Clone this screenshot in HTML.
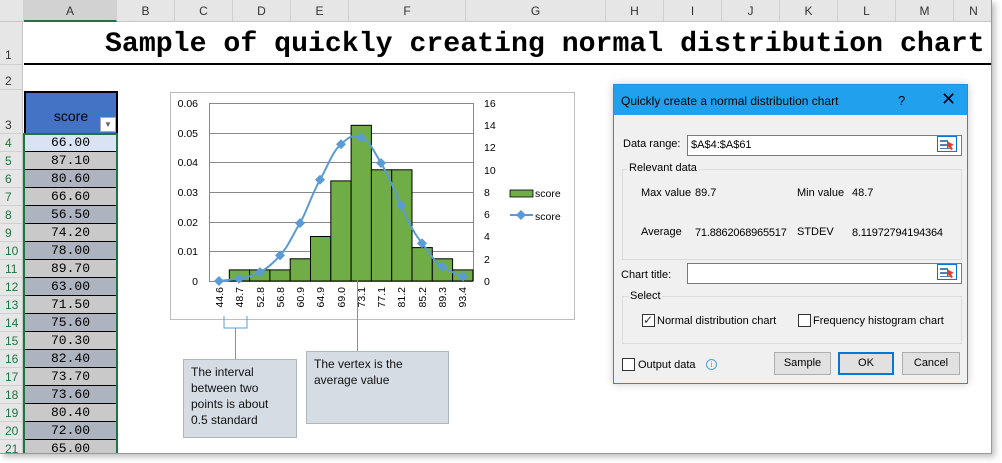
<!DOCTYPE html>
<html><head><meta charset="utf-8"><style>
*{margin:0;padding:0;box-sizing:border-box}
body{width:1002px;height:463px;background:#fff;position:relative;overflow:hidden;font-family:"Liberation Sans",sans-serif}
.a{position:absolute}
.ch{position:absolute;top:0;height:22px;background:#e6e6e6;border-right:1px solid #d0d0d0;border-bottom:1px solid #c6c6c6;font-size:12px;color:#333;text-align:center;line-height:22px}
.rh{position:absolute;left:0;width:23px;background:#e6e6e6;border-bottom:1px solid #d0d0d0;border-right:1px solid #c6c6c6;font-size:12px;color:#333;padding-left:5px}
.cell{position:absolute;left:24px;width:93px;height:18px;border-bottom:1px solid #000;font-family:"Liberation Mono",monospace;font-size:13px;text-align:center;line-height:18px;color:#000}
.dl{position:absolute;font-size:11px;color:#000;font-family:"Liberation Sans",sans-serif}
.btn{position:absolute;height:23px;background:#e1e1e1;border:1px solid #adadad;font-size:11px;text-align:center;line-height:21px}
.cb{position:absolute;width:13px;height:13px;border:1px solid #333;background:#fff}
.grp{position:absolute;border:1px solid #dcdcdc}
</style></head><body>
<div class="a" style="left:0;top:0;width:992px;height:454px;border-right:1px solid #999;border-bottom:1px solid #999;box-shadow:3px 3px 6px rgba(0,0,0,.25);background:#fff;overflow:hidden">
<div class="ch" style="left:0;width:24px;background:#e6e6e6"></div>
<div class="ch" style="left:24px;width:93px;background:#d2d2d2;border-bottom:2px solid #217346">A</div>
<div class="ch" style="left:117px;width:58px">B</div>
<div class="ch" style="left:175px;width:58px">C</div>
<div class="ch" style="left:233px;width:58px">D</div>
<div class="ch" style="left:291px;width:58px">E</div>
<div class="ch" style="left:349px;width:117px">F</div>
<div class="ch" style="left:466px;width:140px">G</div>
<div class="ch" style="left:606px;width:58px">H</div>
<div class="ch" style="left:664px;width:58px">I</div>
<div class="ch" style="left:722px;width:58px">J</div>
<div class="ch" style="left:780px;width:58px">K</div>
<div class="ch" style="left:838px;width:58px">L</div>
<div class="ch" style="left:896px;width:58px">M</div>
<div class="ch" style="left:954px;width:40px">N</div>
<div class="rh" style="top:22px;height:43px;padding-top:26px">1</div>
<div class="rh" style="top:65px;height:25px;padding-top:9px">2</div>
<div class="rh" style="top:90px;height:44px;padding-top:28px">3</div>
<div class="a" style="left:105px;top:29px;font-family:'Liberation Mono',monospace;font-weight:bold;font-size:28.2px;white-space:pre;color:#000">Sample of quickly creating normal distribution chart</div>
<div class="a" style="left:24px;top:63px;width:970px;height:2px;background:#000"></div>
<div class="a" style="left:24px;top:91px;width:94px;height:43px;background:#4472c4;border:2px solid #000;border-bottom:none;text-align:center;font-size:14px;padding-top:15px">score</div>
<div class="a" style="left:100px;top:117px;width:16px;height:15px;background:#fff;border:1px solid #aaa;font-size:8px;color:#666;text-align:center;line-height:14px">▼</div>
<div id="rows"></div>
<div class="a" style="left:23px;top:133px;width:95px;height:330px;border:2px solid #217346;border-bottom:none"></div>
<svg class="a" style="left:0;top:0" width="992" height="454">
<rect x="170.5" y="92.5" width="404" height="227" fill="#fff" stroke="#bdbdbd"/>
<g stroke="#898989" stroke-width="1">
<line x1="209" y1="103.5" x2="473" y2="103.5"/><line x1="209" y1="133.5" x2="473" y2="133.5"/><line x1="209" y1="162.5" x2="473" y2="162.5"/><line x1="209" y1="192.5" x2="473" y2="192.5"/><line x1="209" y1="222.5" x2="473" y2="222.5"/><line x1="209" y1="251.5" x2="473" y2="251.5"/><line x1="209" y1="281.5" x2="473" y2="281.5"/>
<line x1="209.5" y1="103" x2="209.5" y2="281"/><line x1="473.5" y1="103" x2="473.5" y2="281"/>
</g>
<g fill="#70ad47" stroke="#000" stroke-width="1">
<rect x="229.3" y="269.9" width="20.3" height="11.1"/><rect x="249.6" y="269.9" width="20.3" height="11.1"/><rect x="269.9" y="269.9" width="20.3" height="11.1"/><rect x="290.2" y="258.8" width="20.3" height="22.2"/><rect x="310.5" y="236.5" width="20.3" height="44.5"/><rect x="330.8" y="180.9" width="20.3" height="100.1"/><rect x="351.1" y="125.3" width="20.3" height="155.7"/><rect x="371.4" y="169.8" width="20.3" height="111.2"/><rect x="391.7" y="169.8" width="20.3" height="111.2"/><rect x="412" y="247.6" width="20.3" height="33.4"/><rect x="432.3" y="258.8" width="20.3" height="22.2"/><rect x="452.6" y="269.9" width="20.3" height="11.1"/>
</g>
<path d="M219,281 C225,280 232,280 239,278.8 C248,277 252,276 260,272.1 C268,268 273,263 280,255.4 C288,247 292,236 300,223.1 C307,211 311,196 320,179.8 C328,166 332,152 341,144.2 C349,137 352,134 361,137.5 C370,141 373,150 381,163 C389,176 394,190 401,205.3 C408,221 413,232 422,243.2 C430,253 434,262 442,266.5 C450,271 455,274 463,276.5" fill="none" stroke="#5b9bd5" stroke-width="2"/>
<g fill="#5b9bd5">
<path d="M219,276l5,5-5,5-5-5z"/><path d="M239,273.8l5,5-5,5-5-5z"/><path d="M260,267.1l5,5-5,5-5-5z"/><path d="M280,250.4l5,5-5,5-5-5z"/><path d="M300,218.1l5,5-5,5-5-5z"/><path d="M320,174.8l5,5-5,5-5-5z"/><path d="M341,139.2l5,5-5,5-5-5z"/><path d="M361,132.5l5,5-5,5-5-5z"/><path d="M381,158l5,5-5,5-5-5z"/><path d="M401,200.3l5,5-5,5-5-5z"/><path d="M422,238.2l5,5-5,5-5-5z"/><path d="M442,261.5l5,5-5,5-5-5z"/><path d="M463,271.5l5,5-5,5-5-5z"/>
</g>
<g font-family="Liberation Sans" font-size="10.5" fill="#000" text-anchor="end">
<text x="198" y="107">0.06</text><text x="198" y="137">0.05</text><text x="198" y="166">0.04</text><text x="198" y="196">0.03</text><text x="198" y="226">0.02</text><text x="198" y="255">0.01</text><text x="198" y="285">0</text>
</g>
<g font-family="Liberation Sans" font-size="10.5" fill="#000">
<text x="484" y="107">16</text><text x="484" y="129">14</text><text x="484" y="151">12</text><text x="484" y="174">10</text><text x="484" y="196">8</text><text x="484" y="218">6</text><text x="484" y="240">4</text><text x="484" y="263">2</text><text x="484" y="285">0</text>
<text x="535" y="197">score</text><text x="535" y="220">score</text>
</g>
<rect x="510" y="190" width="23" height="7" fill="#70ad47" stroke="#000" stroke-width=".8"/>
<line x1="510" y1="215" x2="533" y2="215" stroke="#5b9bd5" stroke-width="2"/><path d="M521,210l5,5-5,5-5-5z" fill="#5b9bd5"/>
<g font-family="Liberation Sans" font-size="10.5" fill="#000" text-anchor="end">
<text transform="translate(223,287) rotate(-90)">44.6</text><text transform="translate(243,287) rotate(-90)">48.7</text><text transform="translate(264,287) rotate(-90)">52.8</text><text transform="translate(284,287) rotate(-90)">56.8</text><text transform="translate(304,287) rotate(-90)">60.9</text><text transform="translate(324,287) rotate(-90)">64.9</text><text transform="translate(345,287) rotate(-90)">69.0</text><text transform="translate(365,287) rotate(-90)">73.1</text><text transform="translate(385,287) rotate(-90)">77.1</text><text transform="translate(405,287) rotate(-90)">81.2</text><text transform="translate(426,287) rotate(-90)">85.2</text><text transform="translate(446,287) rotate(-90)">89.3</text><text transform="translate(466,287) rotate(-90)">93.4</text>
</g>
<path d="M224,316 L224,328 L247,328 L247,316 M235.5,328 L235.5,359" fill="none" stroke="#5b9bd5" stroke-width="1"/>
<line x1="357.5" y1="145" x2="357.5" y2="351" stroke="#5b9bd5"/>
<rect x="183.5" y="359.5" width="113" height="78" fill="#d6dce4" stroke="#aeb5bd"/>
<rect x="306.5" y="351.5" width="142" height="72" fill="#d6dce4" stroke="#aeb5bd"/>
<g font-family="Liberation Sans" font-size="12" fill="#111">
<text x="191" y="376">The interval</text><text x="191" y="392">between two</text><text x="191" y="408">points is about</text><text x="191" y="424">0.5 standard</text>
<text x="314" y="368">The vertex is the</text><text x="314" y="384">average value</text>
</g>
</svg>
</div>
<div class="a" style="left:613px;top:84px;width:355px;height:300px;background:#f0f0f0;border:1px solid #1e90e0;box-shadow:0 0 8px rgba(0,0,0,.2)">
<div class="a" style="left:0;top:0;width:353px;height:30px;background:#21a0ee"></div>
<div class="dl" style="left:7px;top:9px;font-size:12px">Quickly create a normal distribution chart</div>
<div class="dl" style="left:284px;top:8px;font-size:13px">?</div>
<div class="dl" style="left:327px;top:4px;font-size:18px">✕</div>
<div class="dl" style="left:9px;top:53px">Data range:</div>
<div class="a" style="left:73px;top:50px;width:275px;height:21px;background:#fff;border:1px solid #7a7a7a"></div>
<div class="dl" style="left:77px;top:54px">$A$4:$A$61</div>
<div class="grp" style="left:8px;top:84px;width:340px;height:91px"></div>
<div class="dl" style="left:13px;top:77px;background:#f0f0f0;padding:0 2px">Relevant data</div>
<div class="dl" style="left:27px;top:102px">Max value</div><div class="dl" style="left:81px;top:102px">89.7</div>
<div class="dl" style="left:183px;top:102px">Min value</div><div class="dl" style="left:238px;top:102px">48.7</div>
<div class="dl" style="left:27px;top:141px">Average</div><div class="dl" style="left:81px;top:142px;letter-spacing:-0.2px">71.8862068965517</div>
<div class="dl" style="left:183px;top:141px">STDEV</div><div class="dl" style="left:238px;top:142px;letter-spacing:-0.2px">8.11972794194364</div>
<div class="dl" style="left:7px;top:184px">Chart title:</div>
<div class="a" style="left:73px;top:178px;width:275px;height:21px;background:#fff;border:1px solid #7a7a7a"></div>
<div class="grp" style="left:8px;top:211px;width:340px;height:48px"></div>
<div class="dl" style="left:15px;top:205px;background:#f0f0f0;padding:0 1px">Select</div>
<div class="cb" style="left:28px;top:229px;font-size:12px;line-height:10px;color:#333">✓</div>
<div class="dl" style="left:43px;top:230px">Normal distribution chart</div>
<div class="cb" style="left:184px;top:229px"></div>
<div class="dl" style="left:199px;top:230px">Frequency histogram chart</div>
<div class="cb" style="left:8px;top:273px"></div>
<div class="dl" style="left:24px;top:274px">Output data</div>
<div class="a" style="left:92px;top:274px;width:11px;height:11px;border:1px solid #5b9bd5;border-radius:50%;font-size:8px;color:#5b9bd5;text-align:center;line-height:9px">i</div>
<div class="btn" style="left:160px;top:267px;width:57px">Sample</div>
<div class="btn" style="left:224px;top:267px;width:56px;border:2px solid #0078d7;line-height:19px">OK</div>
<div class="btn" style="left:288px;top:267px;width:58px">Cancel</div>
</div>
<svg class="a" style="left:937px;top:136px" width="20" height="16"><rect x=".5" y=".5" width="19" height="15" fill="#fff" stroke="#0078d7"/><rect x="3" y="4" width="8" height="2" fill="#4f81bd"/><rect x="3" y="8" width="8" height="2" fill="#4f81bd"/><rect x="3" y="12" width="12" height="1" fill="#4f81bd"/><path d="M10,5l7,4-3,1 2,3-2,1-2-3-2,2z" fill="#e04020"/></svg>
<svg class="a" style="left:937px;top:264px" width="20" height="16"><rect x=".5" y=".5" width="19" height="15" fill="#fff" stroke="#0078d7"/><rect x="3" y="4" width="8" height="2" fill="#4f81bd"/><rect x="3" y="8" width="8" height="2" fill="#4f81bd"/><rect x="3" y="12" width="12" height="1" fill="#4f81bd"/><path d="M10,5l7,4-3,1 2,3-2,1-2-3-2,2z" fill="#e04020"/></svg>
<script>
var v=["66.00","87.10","80.60","66.60","56.50","74.20","78.00","89.70","63.00","71.50","75.60","70.30","82.40","73.70","73.60","80.40","72.00","65.00"],h="";
for(var i=0;i<v.length;i++){var t=134+i*18,r=i+4,bg=i==0?"#dae3f3":(i%2?"#c9c9c9":"#adb3bf");
h+='<div class="rh" style="top:'+t+'px;height:18px;line-height:18px;color:#217346">'+r+'</div>';
h+='<div class="cell" style="top:'+t+'px;background:'+bg+'">'+v[i]+'</div>';}
document.getElementById("rows").outerHTML=h;
</script>
</body></html>
